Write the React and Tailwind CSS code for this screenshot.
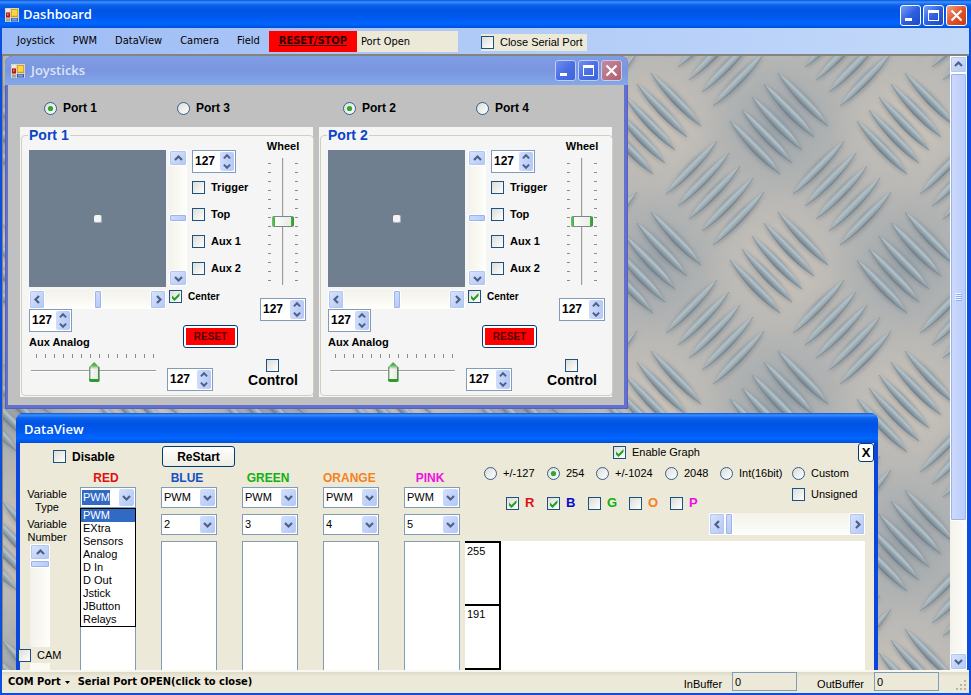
import { useState } from "react";
import clsx from "clsx";

const VARIABLE_TYPES = ["PWM", "EXtra", "Sensors", "Analog", "D In", "D Out", "Jstick", "JButton", "Relays"];

const CHANNELS = [
  { name: "RED", color: "text-[#e01010]", number: "1", open: true },
  { name: "BLUE", color: "text-[#1550c8]", number: "2" },
  { name: "GREEN", color: "text-[#10b010]", number: "3" },
  { name: "ORANGE", color: "text-[#f58220]", number: "4" },
  { name: "PINK", color: "text-[#f010e0]", number: "5" },
];

const RANGES = ["+/-127", "254", "+/-1024", "2048", "Int(16bit)", "Custom"];

const TRACES = [
  { name: "R", color: "text-[#e01010]", on: true },
  { name: "B", color: "text-[#0808d0]", on: true },
  { name: "G", color: "text-[#10b010]", on: false },
  { name: "O", color: "text-[#f58220]", on: false },
  { name: "P", color: "text-[#f010e0]", on: false },
];

/* ---------- diamond plate wallpaper ---------- */

const RIDGES_A = [[48, 0], [34, 11], [22, 24], [12, 37], [0, 48]];
const RIDGES_B = [[51, 0], [63, 12], [74, 25], [87, 37], [98, 51]];
const TILES = [-1, 0, 1, 2].flatMap((i) => [-1, 0, 1, 2].map((j) => [i, j]));

function DiamondPlate() {
  return (
    <svg className="absolute inset-0 h-full w-full" aria-hidden="true">
      <defs>
        <radialGradient id="warm">
          <stop offset="0" stopColor="#d4cabe" stopOpacity="0.9" />
          <stop offset="1" stopColor="#c4beb6" stopOpacity="0" />
        </radialGradient>
        <radialGradient id="cool">
          <stop offset="0" stopColor="#9aa4ab" stopOpacity="0.9" />
          <stop offset="1" stopColor="#a3a9ad" stopOpacity="0" />
        </radialGradient>
        <linearGradient id="ridgeA" gradientUnits="userSpaceOnUse" x1="22" y1="30" x2="29" y2="23">
          <stop offset="0" stopColor="#6d7c87" />
          <stop offset="0.4" stopColor="#95a5ae" />
          <stop offset="0.65" stopColor="#b6c3ca" />
          <stop offset="1" stopColor="#80909a" />
        </linearGradient>
        <linearGradient id="ridgeB" gradientUnits="userSpaceOnUse" x1="-29" y1="23" x2="-22" y2="30">
          <stop offset="0" stopColor="#84949d" />
          <stop offset="0.35" stopColor="#b4c1c7" />
          <stop offset="0.65" stopColor="#9cabb2" />
          <stop offset="1" stopColor="#697881" />
        </linearGradient>
        <filter id="soft" x="-30%" y="-30%" width="160%" height="160%">
          <feGaussianBlur stdDeviation="2" />
        </filter>
        <g id="leafA">
          <path d="M-1 0Q16 35 51 55Q36 22-1 0" fill="#727d84" opacity="0.5" filter="url(#soft)" />
          <path d="M0 0Q20 34 50 53Q32 21 0 0" fill="url(#ridgeA)" />
          <path d="M0 0Q20 34 50 53" fill="none" stroke="#667580" strokeWidth="0.7" opacity="0.7" />
        </g>
        <g id="leafB">
          <path d="M1 1Q-18 36-51 55Q-34 20 1 1" fill="#6f7a80" opacity="0.5" filter="url(#soft)" />
          <path d="M0 0Q-19 32-51 53Q-32 21 0 0" fill="url(#ridgeB)" />
          <path d="M0 0Q-19 32-51 53" fill="none" stroke="#667580" strokeWidth="0.7" opacity="0.7" />
        </g>
        <pattern id="plate" patternUnits="userSpaceOnUse" x="727" y="17" width="254" height="278">
          <rect width="254" height="278" fill="#b7b7b5" />
          {TILES.map(([i, j]) => (
            <circle
              key={`t${i},${j}`}
              cx={i * 127 + 50}
              cy={j * 139 + 52}
              r="78"
              fill={(i + j) % 2 === 0 ? "url(#cool)" : "url(#warm)"}
            />
          ))}
          {TILES.map(([i, j]) => (
            <g key={`g${i},${j}`} transform={`translate(${i * 127} ${j * 139})`}>
              {RIDGES_A.map(([x, y]) => <use key={x} href="#leafA" x={x} y={y} />)}
              {RIDGES_B.map(([x, y]) => <use key={x} href="#leafB" x={x + 63} y={y + 68} />)}
            </g>
          ))}
        </pattern>
      </defs>
      <rect width="100%" height="100%" fill="url(#plate)" />
    </svg>
  );
}

/* ---------- small XP style controls ---------- */

function Chevron({ dir, className = "size-2" }) {
  const paths = {
    up: "M1 6L4.500 2.500L8 6",
    down: "M1 3L4.500 6.500L8 3",
    left: "M6 1L2.500 4.500L6 8",
    right: "M3 1L6.500 4.500L3 8",
  };
  return (
    <svg viewBox="0 0 9 9" className={className} fill="none" stroke="#4d6185" strokeWidth="2.200" aria-hidden="true">
      <path d={paths[dir]} />
    </svg>
  );
}

function CheckBox({ label, defaultChecked = false, className, textClass = "" }) {
  return (
    <label className={clsx("flex items-center", className)}>
      <span className="grid shrink-0">
        <input
          type="checkbox"
          defaultChecked={defaultChecked}
          className="peer col-start-1 row-start-1 size-[13px] appearance-none border border-[#1c5180] bg-linear-to-br from-[#dcdcd7] to-white"
        />
        <svg
          viewBox="0 0 13 13"
          className="pointer-events-none invisible col-start-1 row-start-1 size-[13px] peer-checked:visible"
          aria-hidden="true"
        >
          <path d="M3 5.500V8.500L5.500 11L10.500 6V3L5.500 8Z" fill="#21a121" />
        </svg>
      </span>
      <span className={textClass}>{label}</span>
    </label>
  );
}

function Radio({ label, name, defaultChecked = false, className }) {
  return (
    <label className={clsx("flex items-center gap-1.5 whitespace-nowrap", className)}>
      <span className="grid shrink-0">
        <input
          type="radio"
          name={name}
          defaultChecked={defaultChecked}
          className="peer col-start-1 row-start-1 size-[13px] appearance-none rounded-full border border-[#33608c] bg-linear-to-br from-[#dcdcd7] to-white"
        />
        <svg
          viewBox="0 0 13 13"
          className="pointer-events-none invisible col-start-1 row-start-1 size-[13px] peer-checked:visible"
          aria-hidden="true"
        >
          <circle cx="6.500" cy="6.500" r="2.600" fill="#2ea82e" />
        </svg>
      </span>
      <span>{label}</span>
    </label>
  );
}

function Spinner({ label, className = "w-[46px]" }) {
  const [value, setValue] = useState(127);
  const arrow = "flex flex-1 items-center justify-center";
  return (
    <div className={clsx("flex h-[23px] shrink-0 border border-[#7f9db9] bg-white p-px", className)}>
      <input
        aria-label={label}
        inputMode="numeric"
        value={value}
        onChange={(e) => setValue(Number(e.target.value) || 0)}
        className="w-0 min-w-0 flex-1 pb-0.5 pl-px text-xs font-bold outline-none"
      />
      <div className="flex w-[14px] flex-col rounded-xs bg-linear-to-r from-[#cfdcfc] to-[#b5c8f6]">
        <button type="button" aria-label="Increase" className={arrow} onClick={() => setValue(value + 1)}>
          <Chevron dir="up" />
        </button>
        <button type="button" aria-label="Decrease" className={arrow} onClick={() => setValue(value - 1)}>
          <Chevron dir="down" />
        </button>
      </div>
    </div>
  );
}

function ScrollButton({ dir, className }) {
  return (
    <button
      type="button"
      aria-label={`Scroll ${dir}`}
      className={clsx(
        "flex shrink-0 items-center justify-center rounded-xs border border-white bg-linear-to-br from-[#dae5fe] to-[#b3c6f5] shadow-[0_0_0_1px_#b4c8ee_inset]",
        className
      )}
    >
      <Chevron dir={dir} className="size-[9px]" />
    </button>
  );
}

const thumbStyle = "shrink-0 rounded-xs border border-white shadow-[0_0_0_1px_#9db4e8_inset]";

function VScroll({ className, button = "h-4", before = "grow", thumb = "h-2", last = true, grip = false }) {
  return (
    <div className={clsx("flex flex-col bg-linear-to-r from-[#f3f2ea] to-[#fefefb]", className)}>
      <ScrollButton dir="up" className={button} />
      <div className={before} />
      <div className={clsx(thumbStyle, "flex items-center justify-center bg-linear-to-r from-[#cddafd] to-[#b9cbf8]", thumb)}>
        {grip && (
          <svg viewBox="0 0 7 8" className="h-2 w-[7px]" aria-hidden="true">
            <path d="M0 .5H6M0 2.500H6M0 4.500H6M0 6.500H6" stroke="#eef4fe" />
            <path d="M1 1.500H7M1 3.500H7M1 5.500H7M1 7.500H7" stroke="#8cb0f8" />
          </svg>
        )}
      </div>
      <div className="grow" />
      {last && <ScrollButton dir="down" className={button} />}
    </div>
  );
}

function HScroll({ className, before = "grow", thumb = "w-2" }) {
  return (
    <div className={clsx("flex bg-linear-to-b from-[#f3f2ea] to-[#fefefb]", className)}>
      <ScrollButton dir="left" className="w-4" />
      <div className={before} />
      <div className={clsx(thumbStyle, "bg-linear-to-b from-[#cddafd] to-[#b9cbf8]", thumb)} />
      <div className="grow" />
      <ScrollButton dir="right" className="w-4" />
    </div>
  );
}

const TICKS = Array.from({ length: 14 }, (_, i) => i);

function WheelSlider() {
  return (
    <div className="grid h-[130px] w-8 justify-items-center">
      <svg viewBox="0 0 32 130" className="col-start-1 row-start-1 h-full w-full" aria-hidden="true">
        {TICKS.map((i) => (
          <path key={i} d={`M1 ${7.5 + i * 9}h3M28 ${7.5 + i * 9}h3`} stroke="#8b8b85" />
        ))}
        <path d="M15.500 2V129" stroke="#9d9c99" />
        <path d="M16.500 2V129" stroke="#e4e4e0" />
      </svg>
      <input
        type="range"
        aria-label="Wheel"
        defaultValue="50"
        className="col-start-1 row-start-1 h-[130px] w-[22px] appearance-none bg-transparent [writing-mode:vertical-lr] [&::-webkit-slider-thumb]:h-[11px] [&::-webkit-slider-thumb]:w-[22px] [&::-webkit-slider-thumb]:appearance-none [&::-webkit-slider-thumb]:rounded-xs [&::-webkit-slider-thumb]:bg-[linear-gradient(to_bottom,#778892_1px,transparent_1px,transparent_10px,#778892_10px),linear-gradient(to_right,#6fc46f_0,#3fae3f_3px,#fbfbf9_3px,#ecece6_19px,#3fae3f_19px,#2c9a2c_100%)]"
      />
    </div>
  );
}

function AnalogSlider() {
  return (
    <div className="grid h-7 w-[128px] items-end">
      <svg viewBox="0 0 128 28" className="col-start-1 row-start-1 h-full w-full" aria-hidden="true">
        {TICKS.map((i) => (
          <path key={i} d={`M${7.5 + i * 9} 0v4`} stroke="#8b8b85" />
        ))}
        <path d="M2 16.500H127" stroke="#9d9c99" />
        <path d="M2 17.500H127" stroke="#ffffff" />
      </svg>
      <input
        type="range"
        aria-label="Aux Analog"
        defaultValue="51"
        className="col-start-1 row-start-1 h-5 w-full appearance-none bg-transparent [&::-webkit-slider-thumb]:h-5 [&::-webkit-slider-thumb]:w-[11px] [&::-webkit-slider-thumb]:appearance-none [&::-webkit-slider-thumb]:rounded-b-xs [&::-webkit-slider-thumb]:bg-[linear-gradient(to_top,#2c9a2c_3px,transparent_3px),linear-gradient(to_bottom,#4db04d_3px,transparent_7px),linear-gradient(to_right,#7d9c86_1px,#f8f8f4_2px,#e9e9e2_9px,#4d8a5d_9px)] [&::-webkit-slider-thumb]:[clip-path:polygon(50%_0,100%_28%,100%_100%,0_100%,0_28%)]"
      />
    </div>
  );
}

/* ---------- window chrome ---------- */

function FormIcon() {
  return (
    <svg viewBox="0 0 14 14" className="size-[14px] shrink-0" aria-hidden="true">
      <rect width="14" height="14" fill="#d8d4c8" />
      <rect x="1" y="1" width="4" height="3" fill="#eceae2" />
      <rect x="1" y="4.500" width="4" height="5" fill="#b01818" />
      <rect x="2" y="5.500" width="1.500" height="2" fill="#f08070" />
      <rect x="6" y="1" width="7" height="8" fill="#d89a10" />
      <rect x="6.800" y="1.800" width="5.400" height="6" fill="#fbd648" />
      <rect x="6" y="10" width="7" height="3.500" fill="#2a58c0" />
      <rect x="7" y="10.500" width="5" height="2" fill="#7aa0f0" />
      <rect x="1" y="10.500" width="4" height="3" fill="#a8a498" />
    </svg>
  );
}

function CaptionButtons({ active }) {
  const base = "flex size-[21px] items-center justify-center rounded-[3px] border";
  const blue = active
    ? "border-white bg-linear-to-br from-[#7a9ff5] via-[#2f5fe0] to-[#1a48c8]"
    : "border-[#c0ccf2] bg-linear-to-br from-[#6f8ff0] via-[#4a6fe4] to-[#3f63dc]";
  const red = active
    ? "border-white bg-linear-to-br from-[#f0a080] via-[#e0532c] to-[#c83a10]"
    : "border-[#d0c8e4] bg-linear-to-br from-[#c08aa0] to-[#b0606e]";
  return (
    <div className="ml-auto flex gap-0.5">
      <button type="button" aria-label="Minimize" className={clsx(base, blue)}>
        <svg viewBox="0 0 19 19" className="size-[19px]" aria-hidden="true"><path d="M4 12h7v3H4z" fill="#fff" /></svg>
      </button>
      <button type="button" aria-label="Maximize" className={clsx(base, blue)}>
        <svg viewBox="0 0 19 19" className="size-[19px]" aria-hidden="true">
          <path d="M4 4h11v11H4zM5 7v7h9V7z" fill="#fff" fillRule="evenodd" />
        </svg>
      </button>
      <button type="button" aria-label="Close" className={clsx(base, red)}>
        <svg viewBox="0 0 19 19" className="size-[19px]" aria-hidden="true">
          <path d="M4.500 4.500l10 10M14.500 4.500l-10 10" stroke="#fff" strokeWidth="2.200" />
        </svg>
      </button>
    </div>
  );
}

const titleFont = "font-['Open_Sans','Noto_Sans',sans-serif] text-[13px] font-semibold";
const activeBar =
  "bg-[linear-gradient(to_bottom,#0a52d8_0,#3a90ff_2px,#0a62ee_5px,#0054e3_10px,#0058ee_60%,#0066ff_85%,#004fd8_100%)]";

/* ---------- joystick form ---------- */

function PortPanel({ port, other }) {
  return (
    <section className="w-[293px] text-[11px] font-bold">
      <div className="flex h-[42px] items-center pt-1 pl-6 text-xs">
        <Radio name={`port-${port}`} label={`Port ${port}`} defaultChecked className="w-[133px]" />
        <Radio name={`port-${port}`} label={`Port ${other}`} />
      </div>
      <div className="bg-[#f5f5f5] px-px pb-px">
        <fieldset className="rounded-sm border border-[#d0d0bf] pb-1">
          <legend className="ml-1.5 px-px text-sm leading-4 text-[#0b46c8]">Port {port}</legend>
          <div className="flex pl-[7px]">
            <div className="w-[224px] shrink-0 pt-[7px]">
              <div className="flex">
                <div className="flex size-[137px] items-center justify-center bg-[#6f7f8f]">
                  <div className="size-2 rounded-xs border-r border-b border-[#a8b0b8] bg-[#f4f4f4]" />
                </div>
                <VScroll className="ml-[3px] h-[136px] w-[18px]" />
                <div className="ml-[5px] flex flex-col gap-2">
                  <Spinner label={`Port ${port} Y`} className="w-11" />
                  <div className="flex flex-col gap-3.5">
                    {["Trigger", "Top", "Aux 1", "Aux 2"].map((name) => (
                      <CheckBox key={name} label={name} className="h-[13px] gap-1.5" />
                    ))}
                  </div>
                </div>
              </div>
              <div className="mt-[3px] flex items-start gap-[3px]">
                <HScroll className="h-[19px] w-[137px]" />
                <CheckBox label="Center" defaultChecked className="gap-1.5 text-[10px] leading-[13px]" />
              </div>
              <div className="flex">
                <div className="w-[138px]">
                  <Spinner label={`Port ${port} X`} className="w-[43px]" />
                  <div className="pt-0.5 pb-1 leading-4">Aux Analog</div>
                  <AnalogSlider />
                </div>
                <div className="flex flex-col items-start pt-4">
                  <button
                    type="button"
                    className="ml-4 h-[23px] w-[55px] rounded-[3px] border border-[#003c74] bg-white p-0.5 text-[10px] text-[#500000]"
                  >
                    <span className="flex h-full items-center justify-center bg-[#ff0000]">RESET</span>
                  </button>
                  <div className="pt-5">
                    <Spinner label={`Port ${port} aux analog value`} />
                  </div>
                </div>
              </div>
            </div>
            <div className="-mt-1 flex w-[60px] flex-col items-center">
              <div className="leading-[14px]">Wheel</div>
              <div className="pt-[3px]"><WheelSlider /></div>
              <div className="pt-3"><Spinner label={`Port ${port} wheel value`} /></div>
              <CheckBox
                label="Control"
                className="-ml-5 flex-col pt-[38px]"
                textClass="text-sm leading-4"
              />
            </div>
          </div>
        </fieldset>
      </div>
    </section>
  );
}

function JoysticksWindow() {
  return (
    <div className="absolute top-0 left-0.5 w-max rounded-t-lg bg-[#6270cf] pr-1 pb-1 pl-[3px] shadow-[inset_0_0_0_1px_#5a60b8]">
      <header
        className={clsx(
          titleFont,
          "-mr-1 -ml-[3px] flex h-[29px] items-center gap-1.5 rounded-t-lg bg-linear-to-b from-[#7f9ee6] via-[#7a95df] to-[#84a8ea] px-1.5 text-[#dbe6fa]"
        )}
      >
        <FormIcon />
        <h2>Joysticks</h2>
        <CaptionButtons />
      </header>
      <div className="flex gap-1.5 bg-[#c0c0c0] px-3 pb-2">
        <PortPanel port={1} other={3} />
        <PortPanel port={2} other={4} />
      </div>
    </div>
  );
}

/* ---------- data view form ---------- */

function ComboBox({ label, options, open = false }) {
  return (
    <div className="relative">
      <div className="flex h-[21px] items-center border border-[#7f9db9] bg-white p-px">
        <select
          aria-label={label}
          className={clsx(
            "h-[15px] appearance-none pl-px text-[11px] leading-[15px] outline-none",
            open ? "w-7 bg-[#316ac5] text-white" : "w-9"
          )}
        >
          {options.map((o) => <option key={o}>{o}</option>)}
        </select>
        <span className="pointer-events-none ml-auto flex h-[17px] w-[15px] shrink-0 items-center justify-center rounded-xs bg-linear-to-br from-[#d3e0fd] to-[#b3c6f5]">
          <Chevron dir="down" className="size-[9px]" />
        </span>
      </div>
      {open && (
        <ul role="listbox" aria-label={label} className="absolute inset-x-0 top-full z-10 border border-black bg-white">
          {options.map((o, i) => (
            <li
              key={o}
              role="option"
              aria-selected={i === 0}
              className={clsx("pl-0.5 leading-[13px]", i === 0 && "bg-[#316ac5] text-white")}
            >
              {o}
            </li>
          ))}
        </ul>
      )}
    </div>
  );
}

function ChannelColumn({ channel }) {
  return (
    <div className="flex w-14 flex-col">
      <h3 className={clsx("pr-1 pb-px text-center text-xs leading-4 font-bold", channel.color)}>{channel.name}</h3>
      <ComboBox label={`${channel.name} type`} options={VARIABLE_TYPES} open={channel.open} />
      <div className="py-1.5">
        <ComboBox label={`${channel.name} number`} options={[channel.number]} />
      </div>
      <div className="grow border border-[#7f9db9] bg-white" />
    </div>
  );
}

function DataViewWindow() {
  return (
    <div className="absolute top-[357px] left-[13px] w-[862px] rounded-t-lg bg-[#0b46dc] px-1 pb-1">
      <header className={clsx(titleFont, activeBar, "-mx-1 flex h-[30px] items-center rounded-t-lg px-2 pt-1 text-white")}>
        <h2>DataView</h2>
      </header>
      <div className="flex h-[290px] bg-[#ece9d8] text-[11px]">
        <div className="flex flex-col">
          <div className="flex h-[27px] items-center pl-[33px] text-xs font-bold">
            <CheckBox label="Disable" className="w-[109px] gap-1.5" />
            <button
              type="button"
              className="h-[21px] w-[73px] rounded-[3px] border border-[#003c74] bg-linear-to-b from-white to-[#eeece2]"
            >
              ReStart
            </button>
          </div>
          <div className="flex grow gap-[25px]">
            <div className="-mr-[25px] flex w-[60px] flex-col pt-[18px]">
              <div className="w-[54px] pb-1 text-center leading-[13px]">Variable<br />Type</div>
              <div className="w-[54px] text-center leading-[13px]">Variable<br />Number</div>
              <VScroll className="ml-2.5 h-[103px] w-5" before="h-0" last={false} />
              <CheckBox label="CAM" className="-ml-0.5 h-4 gap-1.5" />
              <div className="ml-2.5 w-5 grow bg-[#fbfaf5]" />
            </div>
            {CHANNELS.map((c) => <ChannelColumn key={c.name} channel={c} />)}
          </div>
        </div>

        <div className="ml-[5px] flex min-w-0 flex-1 flex-col">
          <div className="flex h-[21px] items-start">
            <CheckBox label="Enable Graph" defaultChecked className="h-[19px] gap-1.5 pl-[148px]" />
            <button
              type="button"
              className="ml-auto h-[19px] w-4 rounded-[3px] border border-[#003c74] bg-white text-[13px] leading-4 font-bold"
            >
              X
            </button>
          </div>
          <div className="grid h-[19px] grid-cols-[63px_49px_69px_55px_72px_auto] items-center pl-[19px]">
            {RANGES.map((r) => <Radio key={r} name="range" label={r} defaultChecked={r === "254"} />)}
          </div>
          <div className="flex pr-[9px]">
            <div className="flex items-start pl-[41px] text-[13px] font-bold">
              {TRACES.map((t) => (
                <CheckBox
                  key={t.name}
                  label={t.name}
                  defaultChecked={t.on}
                  className="h-10 w-[41px] gap-1.5 last:w-auto"
                  textClass={t.color}
                />
              ))}
            </div>
            <div className="ml-auto w-[156px] pt-1 pb-1.5">
              <CheckBox label="Unsigned" className="gap-1.5 pb-3 pl-[83px] leading-[14px]" />
              <HScroll className="h-[22px]" before="w-0" />
            </div>
          </div>
          <div className="mr-[9px] flex grow bg-white">
            <div className="w-9 border-t-2 border-r-2 border-black">
              <div className="h-[63px] border-b-2 border-black pl-0.5">255</div>
              <div className="h-[64px] border-b-2 border-black pl-0.5">191</div>
            </div>
          </div>
        </div>
      </div>
    </div>
  );
}

/* ---------- main frame ---------- */

export default function App() {
  return (
    <div className="flex h-screen flex-col overflow-hidden bg-[#0b4fe0] font-['Liberation_Sans',Arial,sans-serif] text-[11px] text-black">
      <header className={clsx(titleFont, activeBar, "flex h-7 shrink-0 items-center gap-1 pt-0.5 pr-1 pl-[5px] text-white")}>
        <FormIcon />
        <h1>Dashboard</h1>
        <CaptionButtons active />
      </header>

      <div className="mx-0.5 mb-0.5 flex min-h-0 flex-1 flex-col">
        <nav className="flex h-[26px] shrink-0 items-center bg-linear-to-r from-[#9ebcf5] to-[#c3d9fa] pl-[6px] font-['DejaVu_Sans_Condensed','Liberation_Sans',sans-serif]">
          {["Joystick", "PWM", "DataView", "Camera", "Field"].map((item) => (
            <button key={item} type="button" className="px-[9px]">{item}</button>
          ))}
          <button type="button" className="h-[21px] bg-[#ff0000] px-2.5 font-bold text-[#300000] underline">
            RESET/STOP
          </button>
          <input
            aria-label="Port status"
            readOnly
            value="Port Open"
            className="h-[21px] w-[101px] bg-[#ece9d8] pl-1"
          />
          <CheckBox
            label="Close Serial Port"
            className="mt-0.5 ml-[23px] h-[17px] gap-1.5 bg-[#ece9d8] pr-1 font-['Liberation_Sans',sans-serif]"
          />
        </nav>

        <main className="flex min-h-0 flex-1 border-t-2 border-l border-[#85857c]">
          <div className="relative flex-1 overflow-hidden">
            <DiamondPlate />
            <JoysticksWindow />
            <DataViewWindow />
          </div>
          <VScroll className="mr-0.5 w-[17px]" button="h-[17px]" before="h-0" thumb="h-[73%]" grip />
        </main>

        <footer className="flex h-[23px] shrink-0 items-center border-t-2 border-[#f8f7f0] bg-linear-to-b from-[#dcd9c6] to-[#ece9d8] to-20% pl-1.5">
          <div className="flex items-center gap-2 font-['DejaVu_Sans_Condensed','Liberation_Sans',sans-serif] font-bold">
            <button type="button" className="flex items-center gap-1">
              COM Port
              <svg viewBox="0 0 5 3" className="h-[3px] w-[5px]" aria-hidden="true"><path d="M0 0h5L2.500 3z" /></svg>
            </button>
            <button type="button">Serial Port OPEN(click to close)</button>
          </div>
          <div className="ml-auto flex h-full items-start">
            <label htmlFor="inbuf" className="pt-1 pr-2.5">InBuffer</label>
            <input id="inbuf" readOnly value="0" className="h-[19px] w-[65px] border border-[#7f9db9] bg-[#ece9d8] pl-0.5" />
            <label htmlFor="outbuf" className="pt-1 pr-2.5 pl-5">OutBuffer</label>
            <input id="outbuf" readOnly value="0" className="h-[19px] w-[65px] border border-[#7f9db9] bg-[#ece9d8] pl-0.5" />
          </div>
          <svg viewBox="0 0 12 12" className="mt-1 mr-0.5 ml-4 size-3 shrink-0" aria-hidden="true">
            <path d="M9 1h2v2H9zM5 5h2v2H5zM9 5h2v2H9zM1 9h2v2H1zM5 9h2v2H5zM9 9h2v2H9z" fill="#b8b4a0" />
          </svg>
        </footer>
      </div>
    </div>
  );
}
